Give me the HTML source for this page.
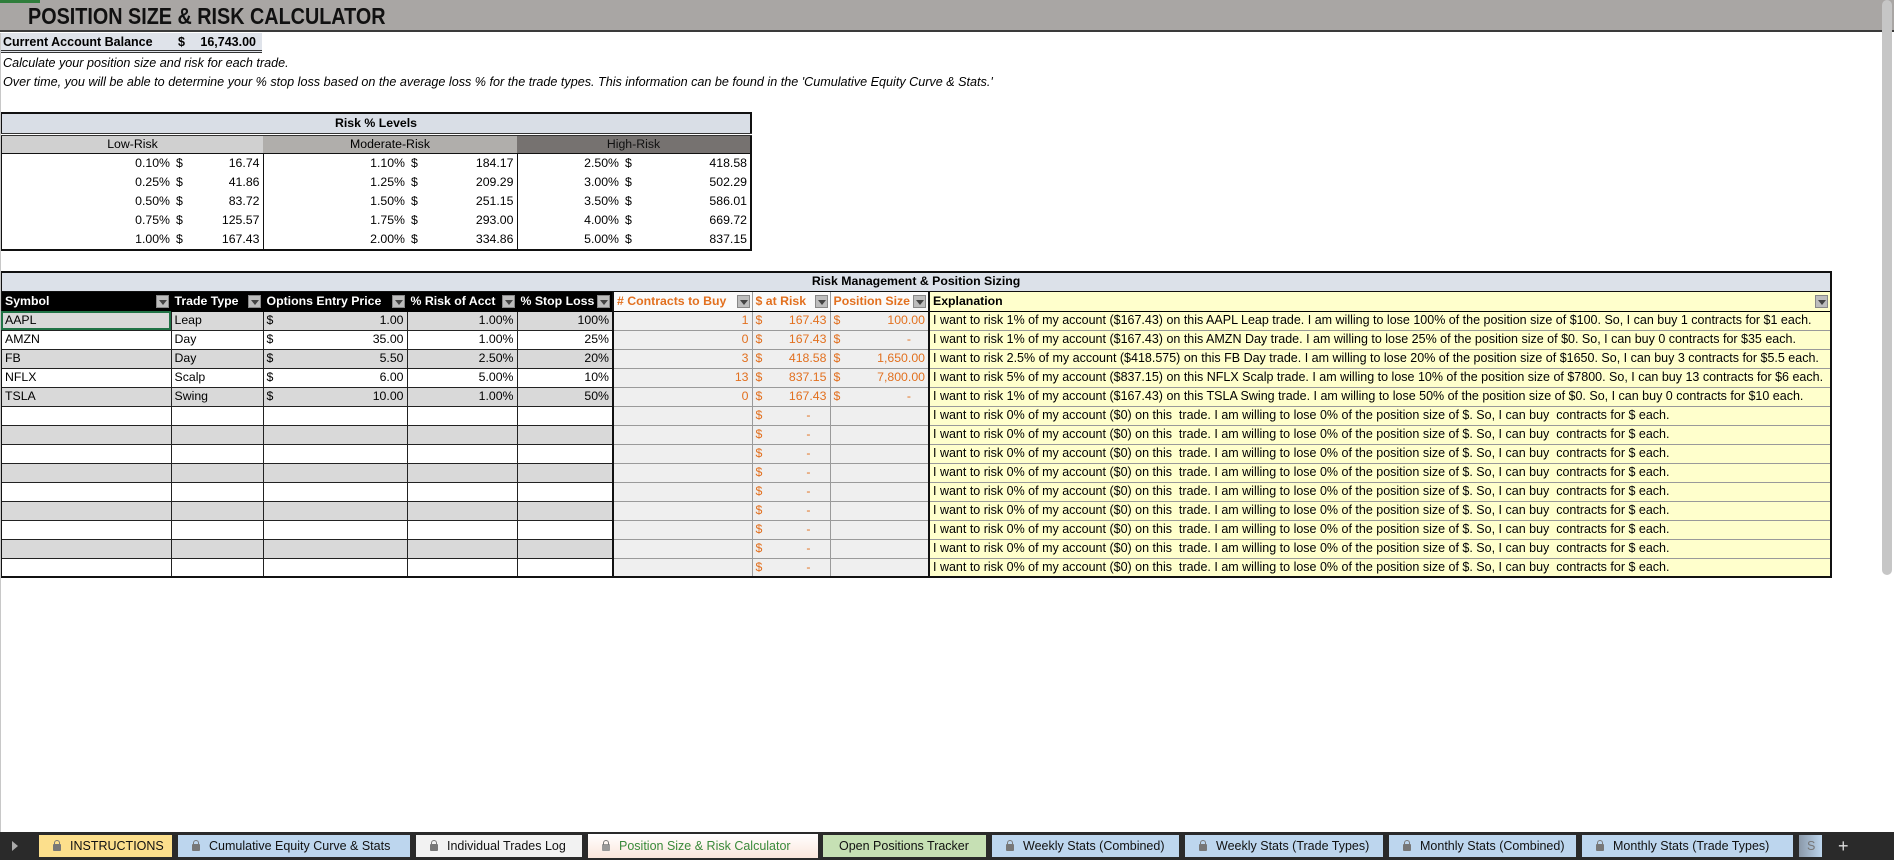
<!DOCTYPE html>
<html><head><meta charset="utf-8"><style>
*{margin:0;padding:0;box-sizing:border-box}
body{width:1894px;height:860px;overflow:hidden;background:#fff;font-family:"Liberation Sans",Arial,sans-serif;font-size:12px;color:#000;position:relative}
.abs{position:absolute}
#title{left:0;top:0;width:1894px;height:32px;background:#a9a6a4;border-bottom:2px solid #3a3a3a}
#title span{position:absolute;left:28px;top:3px;font-weight:bold;font-size:23px;transform:scaleX(0.86);transform-origin:left;white-space:nowrap;color:#111}
#bal{left:0;top:33px;width:262px;height:20px;background:#dfe3ea;border-bottom:3px double #333;font-weight:bold;font-size:12.5px;line-height:19px}
.it{left:3px;font-style:italic;font-size:12.6px;white-space:nowrap}
table{border-collapse:collapse;table-layout:fixed;position:absolute}
td{overflow:hidden;white-space:nowrap;padding:0 3px;height:19px;line-height:17px;font-size:12.3px}
.m{display:flex;justify-content:space-between}
.r{text-align:right}
#risk{left:0;top:112px;width:750px;border:2px solid #111}
#risk td{height:19.3px}
#main{left:0;top:271px;width:1830px;border:2px solid #111}
.hd td{background:#000;color:#fff;font-weight:bold;position:relative;border:1px solid #000}
.dd{position:absolute;right:2px;top:3px;width:13px;height:13px;background:#bdbdbd;border:1px solid #888}
.dd:after{content:"";position:absolute;left:2px;top:4px;border-left:4px solid transparent;border-right:4px solid transparent;border-top:5px solid #444}
td.c{border:1px solid #222}
.g td.c{background:#d9d9d9}
td.o{background:#efefef;border:1px solid #9a9a9a;color:#e2701f}
td.y{background:#ffffcc;border:1px solid #9a9a9a;font-size:12.5px}
#tabs{left:0;top:832px;width:1894px;height:28px;background:#2a2a2a}
.tab{position:absolute;top:3px;height:22px;font-size:12.5px;line-height:22px;white-space:nowrap;padding-left:14px;color:#111}
.lk{display:inline-block;width:8px;height:7px;background:#777;border-radius:1px;margin-right:9px;position:relative;vertical-align:middle;top:1px}
.lk:before{content:"";position:absolute;left:1px;top:-4px;width:6px;height:5px;box-sizing:border-box;border:1.5px solid #777;border-bottom:none;border-radius:3px 3px 0 0}
</style></head><body>
<div class="abs" style="left:0;top:0;width:40px;height:3px;background:#2f7d3b;z-index:2"></div>
<div id="title" class="abs"><span>POSITION SIZE &amp; RISK CALCULATOR</span></div>
<div id="bal" class="abs"><span style="position:absolute;left:3px">Current Account Balance</span><span style="position:absolute;left:178px">$</span><span style="position:absolute;right:6px">16,743.00</span></div>
<div class="abs it" style="top:56px">Calculate your position size and risk for each trade.</div>
<div class="abs it" style="top:75px">Over time, you will be able to determine your % stop loss based on the average loss % for the trade types. This information can be found in the 'Cumulative Equity Curve &amp; Stats.'</div>

<table id="risk">
<colgroup><col style="width:172px"><col style="width:90px"><col style="width:145px"><col style="width:109px"><col style="width:105px"><col style="width:129px"></colgroup>
<tr><td colspan="6" style="text-align:center;font-weight:bold;background:#d9dee6;border-bottom:3px double #333;height:21px">Risk % Levels</td></tr>
<tr><td colspan="2" style="text-align:center;background:#d0d0d0">Low-Risk</td><td colspan="2" style="text-align:center;background:#b0aeab">Moderate-Risk</td><td colspan="2" style="text-align:center;background:#767270;color:#111">High-Risk</td></tr>
<tr style="border-top:1px solid #111"><td class="r">0.10%</td><td style="border-right:1px solid #111"><div class="m"><span>$</span><span>16.74</span></div></td><td class="r">1.10%</td><td style="border-right:1px solid #111"><div class="m"><span>$</span><span>184.17</span></div></td><td class="r">2.50%</td><td><div class="m"><span>$</span><span>418.58</span></div></td></tr>
<tr><td class="r">0.25%</td><td style="border-right:1px solid #111"><div class="m"><span>$</span><span>41.86</span></div></td><td class="r">1.25%</td><td style="border-right:1px solid #111"><div class="m"><span>$</span><span>209.29</span></div></td><td class="r">3.00%</td><td><div class="m"><span>$</span><span>502.29</span></div></td></tr>
<tr><td class="r">0.50%</td><td style="border-right:1px solid #111"><div class="m"><span>$</span><span>83.72</span></div></td><td class="r">1.50%</td><td style="border-right:1px solid #111"><div class="m"><span>$</span><span>251.15</span></div></td><td class="r">3.50%</td><td><div class="m"><span>$</span><span>586.01</span></div></td></tr>
<tr><td class="r">0.75%</td><td style="border-right:1px solid #111"><div class="m"><span>$</span><span>125.57</span></div></td><td class="r">1.75%</td><td style="border-right:1px solid #111"><div class="m"><span>$</span><span>293.00</span></div></td><td class="r">4.00%</td><td><div class="m"><span>$</span><span>669.72</span></div></td></tr>
<tr><td class="r">1.00%</td><td style="border-right:1px solid #111"><div class="m"><span>$</span><span>167.43</span></div></td><td class="r">2.00%</td><td style="border-right:1px solid #111"><div class="m"><span>$</span><span>334.86</span></div></td><td class="r">5.00%</td><td><div class="m"><span>$</span><span>837.15</span></div></td></tr>
</table>

<table id="main">
<colgroup><col style="width:170px"><col style="width:92px"><col style="width:144px"><col style="width:110px"><col style="width:96px"><col style="width:139px"><col style="width:78px"><col style="width:99px"><col style="width:902px"></colgroup>
<tr><td colspan="9" style="text-align:center;font-weight:bold;background:#dce1e9;border-bottom:1px solid #111">Risk Management &amp; Position Sizing</td></tr>
<tr class="hd" style="height:20px">
<td>Symbol<i class="dd"></i></td><td>Trade Type<i class="dd"></i></td><td>Options Entry Price<i class="dd"></i></td><td>% Risk of Acct<i class="dd"></i></td><td>% Stop Loss<i class="dd"></i></td>
<td style="background:#fafafa;color:#e2701f;border-left:2px solid #111;border-right:1px solid #9a9a9a"># Contracts to Buy<i class="dd"></i></td>
<td style="background:#fafafa;color:#e2701f;border-right:1px solid #9a9a9a">$ at Risk<i class="dd"></i></td>
<td style="background:#fafafa;color:#e2701f;border-right:2px solid #111">Position Size<i class="dd"></i></td>
<td style="background:#ffffcc;color:#000">Explanation<i class="dd"></i></td></tr>
<tr class="g"><td class="c" style="outline:2px solid #217346;outline-offset:-2px">AAPL</td><td class="c">Leap</td><td class="c"><div class="m"><span>$</span><span>1.00</span></div></td><td class="c r">1.00%</td><td class="c r">100%</td><td class="o r" style="border-left:2px solid #111">1</td><td class="o"><div class="m"><span>$</span><span>167.43</span></div></td><td class="o" style="border-right:2px solid #111"><div class="m"><span>$</span><span>100.00</span></div></td><td class="y">I want to risk 1% of my account ($167.43) on this AAPL Leap trade. I am willing to lose 100% of the position size of $100. So, I can buy 1 contracts for $1 each.</td></tr>
<tr><td class="c">AMZN</td><td class="c">Day</td><td class="c"><div class="m"><span>$</span><span>35.00</span></div></td><td class="c r">1.00%</td><td class="c r">25%</td><td class="o r" style="border-left:2px solid #111">0</td><td class="o"><div class="m"><span>$</span><span>167.43</span></div></td><td class="o" style="border-right:2px solid #111"><div class="m"><span>$</span><span style="padding-right:14px">-</span></div></td><td class="y">I want to risk 1% of my account ($167.43) on this AMZN Day trade. I am willing to lose 25% of the position size of $0. So, I can buy 0 contracts for $35 each.</td></tr>
<tr class="g"><td class="c">FB</td><td class="c">Day</td><td class="c"><div class="m"><span>$</span><span>5.50</span></div></td><td class="c r">2.50%</td><td class="c r">20%</td><td class="o r" style="border-left:2px solid #111">3</td><td class="o"><div class="m"><span>$</span><span>418.58</span></div></td><td class="o" style="border-right:2px solid #111"><div class="m"><span>$</span><span>1,650.00</span></div></td><td class="y">I want to risk 2.5% of my account ($418.575) on this FB Day trade. I am willing to lose 20% of the position size of $1650. So, I can buy 3 contracts for $5.5 each.</td></tr>
<tr><td class="c">NFLX</td><td class="c">Scalp</td><td class="c"><div class="m"><span>$</span><span>6.00</span></div></td><td class="c r">5.00%</td><td class="c r">10%</td><td class="o r" style="border-left:2px solid #111">13</td><td class="o"><div class="m"><span>$</span><span>837.15</span></div></td><td class="o" style="border-right:2px solid #111"><div class="m"><span>$</span><span>7,800.00</span></div></td><td class="y">I want to risk 5% of my account ($837.15) on this NFLX Scalp trade. I am willing to lose 10% of the position size of $7800. So, I can buy 13 contracts for $6 each.</td></tr>
<tr class="g"><td class="c">TSLA</td><td class="c">Swing</td><td class="c"><div class="m"><span>$</span><span>10.00</span></div></td><td class="c r">1.00%</td><td class="c r">50%</td><td class="o r" style="border-left:2px solid #111">0</td><td class="o"><div class="m"><span>$</span><span>167.43</span></div></td><td class="o" style="border-right:2px solid #111"><div class="m"><span>$</span><span style="padding-right:14px">-</span></div></td><td class="y">I want to risk 1% of my account ($167.43) on this TSLA Swing trade. I am willing to lose 50% of the position size of $0. So, I can buy 0 contracts for $10 each.</td></tr>
<tr><td class="c"></td><td class="c"></td><td class="c"></td><td class="c"></td><td class="c"></td><td class="o" style="border-left:2px solid #111"></td><td class="o"><div class="m"><span>$</span><span style="padding-right:16px">-</span></div></td><td class="o" style="border-right:2px solid #111"></td><td class="y">I want to risk 0% of my account ($0) on this &nbsp;trade. I am willing to lose 0% of the position size of $. So, I can buy &nbsp;contracts for $ each.</td></tr>
<tr class="g"><td class="c"></td><td class="c"></td><td class="c"></td><td class="c"></td><td class="c"></td><td class="o" style="border-left:2px solid #111"></td><td class="o"><div class="m"><span>$</span><span style="padding-right:16px">-</span></div></td><td class="o" style="border-right:2px solid #111"></td><td class="y">I want to risk 0% of my account ($0) on this &nbsp;trade. I am willing to lose 0% of the position size of $. So, I can buy &nbsp;contracts for $ each.</td></tr>
<tr><td class="c"></td><td class="c"></td><td class="c"></td><td class="c"></td><td class="c"></td><td class="o" style="border-left:2px solid #111"></td><td class="o"><div class="m"><span>$</span><span style="padding-right:16px">-</span></div></td><td class="o" style="border-right:2px solid #111"></td><td class="y">I want to risk 0% of my account ($0) on this &nbsp;trade. I am willing to lose 0% of the position size of $. So, I can buy &nbsp;contracts for $ each.</td></tr>
<tr class="g"><td class="c"></td><td class="c"></td><td class="c"></td><td class="c"></td><td class="c"></td><td class="o" style="border-left:2px solid #111"></td><td class="o"><div class="m"><span>$</span><span style="padding-right:16px">-</span></div></td><td class="o" style="border-right:2px solid #111"></td><td class="y">I want to risk 0% of my account ($0) on this &nbsp;trade. I am willing to lose 0% of the position size of $. So, I can buy &nbsp;contracts for $ each.</td></tr>
<tr><td class="c"></td><td class="c"></td><td class="c"></td><td class="c"></td><td class="c"></td><td class="o" style="border-left:2px solid #111"></td><td class="o"><div class="m"><span>$</span><span style="padding-right:16px">-</span></div></td><td class="o" style="border-right:2px solid #111"></td><td class="y">I want to risk 0% of my account ($0) on this &nbsp;trade. I am willing to lose 0% of the position size of $. So, I can buy &nbsp;contracts for $ each.</td></tr>
<tr class="g"><td class="c"></td><td class="c"></td><td class="c"></td><td class="c"></td><td class="c"></td><td class="o" style="border-left:2px solid #111"></td><td class="o"><div class="m"><span>$</span><span style="padding-right:16px">-</span></div></td><td class="o" style="border-right:2px solid #111"></td><td class="y">I want to risk 0% of my account ($0) on this &nbsp;trade. I am willing to lose 0% of the position size of $. So, I can buy &nbsp;contracts for $ each.</td></tr>
<tr><td class="c"></td><td class="c"></td><td class="c"></td><td class="c"></td><td class="c"></td><td class="o" style="border-left:2px solid #111"></td><td class="o"><div class="m"><span>$</span><span style="padding-right:16px">-</span></div></td><td class="o" style="border-right:2px solid #111"></td><td class="y">I want to risk 0% of my account ($0) on this &nbsp;trade. I am willing to lose 0% of the position size of $. So, I can buy &nbsp;contracts for $ each.</td></tr>
<tr class="g"><td class="c"></td><td class="c"></td><td class="c"></td><td class="c"></td><td class="c"></td><td class="o" style="border-left:2px solid #111"></td><td class="o"><div class="m"><span>$</span><span style="padding-right:16px">-</span></div></td><td class="o" style="border-right:2px solid #111"></td><td class="y">I want to risk 0% of my account ($0) on this &nbsp;trade. I am willing to lose 0% of the position size of $. So, I can buy &nbsp;contracts for $ each.</td></tr>
<tr><td class="c"></td><td class="c"></td><td class="c"></td><td class="c"></td><td class="c"></td><td class="o" style="border-left:2px solid #111"></td><td class="o"><div class="m"><span>$</span><span style="padding-right:16px">-</span></div></td><td class="o" style="border-right:2px solid #111"></td><td class="y">I want to risk 0% of my account ($0) on this &nbsp;trade. I am willing to lose 0% of the position size of $. So, I can buy &nbsp;contracts for $ each.</td></tr>
</table>

<div class="abs" style="left:0;top:33px;width:1px;height:799px;background:#c8c8c8"></div>
<div class="abs" style="left:1882px;top:0;width:10px;height:575px;background:#c6c6c6;border-radius:5px"></div>

<div id="tabs" class="abs">
<div class="abs" style="left:12px;top:9px;border-top:5px solid transparent;border-bottom:5px solid transparent;border-left:6px solid #aaa"></div>
<div class="tab" style="left:39px;width:133px;background:#fcdf8c"><i class="lk"></i>INSTRUCTIONS</div>
<div class="tab" style="left:178px;width:232px;background:#bdd6ee"><i class="lk"></i>Cumulative Equity Curve &amp; Stats</div>
<div class="tab" style="left:416px;width:166px;background:#f2f2f2"><i class="lk"></i>Individual Trades Log</div>
<div class="tab" style="left:588px;width:230px;background:linear-gradient(#fff,#fbe7dc);color:#3a8a3a;top:2px;height:24px;line-height:24px"><i class="lk" style="background:#999"></i>Position Size &amp; Risk Calculator</div>
<div class="tab" style="left:823px;width:163px;background:#c6e0b4;padding-left:16px">Open Positions Tracker</div>
<div class="tab" style="left:992px;width:187px;background:#bdd6ee"><i class="lk"></i>Weekly Stats (Combined)</div>
<div class="tab" style="left:1185px;width:198px;background:#bdd6ee"><i class="lk"></i>Weekly Stats (Trade Types)</div>
<div class="tab" style="left:1389px;width:187px;background:#bdd6ee"><i class="lk"></i>Monthly Stats (Combined)</div>
<div class="tab" style="left:1582px;width:211px;background:#bdd6ee"><i class="lk"></i>Monthly Stats (Trade Types)</div>
<div class="tab" style="left:1799px;width:23px;background:linear-gradient(90deg,#8a98a8,#bdd6ee);padding-left:8px;color:#777">S</div>
<div class="abs" style="left:1838px;top:3px;color:#ddd;font-size:18px;line-height:22px">+</div>
</div>
</body></html>
